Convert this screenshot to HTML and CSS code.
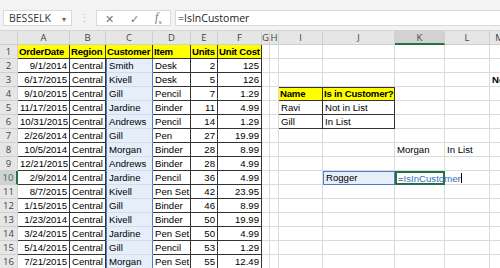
FILE: index.html
```html
<!DOCTYPE html>
<html lang="en">
<head>
    <meta charset="UTF-8">
    <title>Sheet</title>
    <link rel="stylesheet" href="styles.css">
</head>
<body>
<div class="bar">
    <div class="namebox">BESSELK<span class="caret">&#9662;</span></div>
    <div class="dots">&#8942;</div>
    <div class="btns">
        <span class="ico x">&#10005;</span>
        <span class="ico ok">&#10003;</span>
        <span class="ico fx"><i>f</i><sub>x</sub></span>
    </div>
    <div class="formula">=IsInCustomer</div>
</div>
<div class="sheet" id="sheet"></div>
<script>
    const cols = ['', 'A', 'B', 'C', 'D', 'E', 'F', 'G', 'H', 'I', 'J', 'K', 'L', 'M'];
    const widths = [18, 52, 36, 47, 38, 27, 44, 8, 9, 44, 72, 50, 45, 20];
    const data = [
        ['OrderDate', 'Region', 'Customer', 'Item', 'Units', 'Unit Cost'],
        ['9/1/2014', 'Central', 'Smith', 'Desk', '2', '125'],
        ['6/17/2015', 'Central', 'Kivell', 'Desk', '5', '126'],
        ['9/10/2015', 'Central', 'Gill', 'Pencil', '7', '1.29'],
        ['11/17/2015', 'Central', 'Jardine', 'Binder', '11', '4.99'],
        ['10/31/2015', 'Central', 'Andrews', 'Pencil', '14', '1.29'],
        ['2/26/2014', 'Central', 'Gill', 'Pen', '27', '19.99'],
        ['10/5/2014', 'Central', 'Morgan', 'Binder', '28', '8.99'],
        ['12/21/2015', 'Central', 'Andrews', 'Binder', '28', '4.99'],
        ['2/9/2014', 'Central', 'Jardine', 'Pencil', '36', '4.99'],
        ['8/7/2015', 'Central', 'Kivell', 'Pen Set', '42', '23.95'],
        ['1/15/2015', 'Central', 'Gill', 'Binder', '46', '8.99'],
        ['1/23/2014', 'Central', 'Kivell', 'Binder', '50', '19.99'],
        ['3/24/2015', 'Central', 'Jardine', 'Pen Set', '50', '4.99'],
        ['5/14/2015', 'Central', 'Gill', 'Pencil', '53', '1.29'],
        ['7/21/2015', 'Central', 'Morgan', 'Pen Set', '55', '12.49']
    ];
    const extra = {
        '3,M': { text: 'No', cls: 'bold' },
        '4,I': { text: 'Name', cls: 'head box' },
        '4,J': { text: 'Is in Customer?', cls: 'head box' },
        '5,I': { text: 'Ravi', cls: 'box' },
        '5,J': { text: 'Not in List', cls: 'box' },
        '6,I': { text: 'Gill', cls: 'box' },
        '6,J': { text: 'In List', cls: 'box' },
        '8,K': { text: 'Morgan', cls: '' },
        '8,L': { text: 'In List', cls: '' },
        '10,J': { text: 'Rogger', cls: 'ref pick' },
        '10,K': { text: '=<span class="blue">IsInCustomer</span><span class="cursor"></span>', cls: 'active' }
    };

    const sheet = document.getElementById('sheet');
    sheet.style.gridTemplateColumns = widths.map(w => w + 'px').join(' ');

    let html = '';
    cols.forEach(c => {
        html += `<div class="colhead${c === 'K' ? ' sel' : ''}">${c}</div>`;
    });
    for (let r = 1; r <= 16; r++) {
        html += `<div class="rowhead${r === 10 ? ' sel' : ''}">${r}</div>`;
        for (let c = 1; c < cols.length; c++) {
            const key = r + ',' + cols[c];
            let cls = 'cell';
            let text = '';
            if (c <= 6) {
                text = data[r - 1][c - 1];
                cls += ' tbl';
                if (r === 1) cls += ' head';
                else if (c === 1 || c >= 5) cls += ' num';
                if (c === 3 && r > 1) cls += ' ref';
            } else if (extra[key]) {
                text = extra[key].text;
                cls += ' ' + extra[key].cls;
            }
            html += `<div class="${cls}">${text}</div>`;
        }
    }
    sheet.innerHTML = html;
</script>
</body>
</html>
```
FILE: styles.css
```css
body {
    margin: 0;
    width: 500px;
    height: 268px;
    overflow: hidden;
    background: #fff;
    font-family: "Liberation Sans", Arial, sans-serif;
}
.bar {
    height: 31px;
    background: #f3f3f3;
    display: flex;
    align-items: flex-start;
    padding-top: 10px;
    box-sizing: border-box;
    border-bottom: 1px solid #d4d4d4;
    font-family: "Open Sans", sans-serif;
    font-size: 10.5px;
}
.namebox {
    margin-left: 3px;
    width: 69px;
    height: 16px;
    background: #fff;
    border: 1px solid #dadada;
    box-sizing: border-box;
    display: flex;
    align-items: center;
    justify-content: space-between;
    padding: 0 5px 0 5px;
    color: #333;
}
.caret {
    font-size: 8px;
    color: #666;
}
.dots {
    width: 24px;
    text-align: center;
    color: #bbb;
    line-height: 16px;
}
.btns {
    width: 75px;
    height: 16px;
    background: #fff;
    border: 1px solid #dadada;
    box-sizing: border-box;
    display: flex;
    justify-content: space-around;
    align-items: center;
    color: #777;
}
.ico {
    font-size: 11px;
}
.fx {
    font-family: "Liberation Serif", serif;
    font-size: 12px;
}
.fx sub {
    font-size: 7px;
}
.formula {
    margin-left: 4px;
    flex: 1;
    height: 16px;
    background: #fff;
    border: 1px solid #dadada;
    border-right: none;
    box-sizing: border-box;
    padding-left: 2px;
    line-height: 14px;
    color: #222;
}
.sheet {
    display: grid;
    grid-auto-rows: 14px;
    font-size: 9.6px;
    color: #000;
}
.colhead, .rowhead {
    background: #e6e6e6;
    color: #444;
    display: flex;
    align-items: center;
    justify-content: center;
    border-right: 1px solid #d0d0d0;
    border-bottom: 1px solid #d0d0d0;
    box-sizing: border-box;
    font-family: "Open Sans", sans-serif;
    font-size: 9.5px;
}
.colhead.sel {
    background: #d2d2d2;
    border-bottom: 2px solid #217346;
}
.rowhead.sel {
    background: #d2d2d2;
    color: #217346;
    border-right: 2px solid #217346;
}
.cell {
    border-right: 1px solid #dadada;
    border-bottom: 1px solid #dadada;
    box-sizing: border-box;
    padding: 0 2px;
    line-height: 14px;
    white-space: nowrap;
    overflow: visible;
}
.tbl, .box {
    border-right: 1px solid #333;
    border-bottom: 1px solid #333;
}
.head {
    background: #ffff00;
    font-weight: bold;
    padding: 0 1px;
    letter-spacing: -0.2px;
}
.num {
    text-align: right;
}
.ref {
    background: #e6eef9;
    border-left: 1px solid #4a7cc9;
    border-right: 1px solid #4a7cc9;
    border-bottom-color: #d4dce8;
}
.ref.pick {
    border: 1px solid #4a7cc9;
    line-height: 12px;
}
.cell.box.head {
    border-top: 1px solid #333;
    line-height: 12px;
}
.cell.bold {
    font-weight: bold;
}
.active {
    border: 2px solid #217346;
    padding: 0 1px;
    line-height: 10px;
    position: relative;
    z-index: 1;
}
.blue {
    color: #3b6fc6;
}
.cursor {
    display: inline-block;
    width: 1px;
    height: 10px;
    background: #000;
    vertical-align: -1px;
}
```
